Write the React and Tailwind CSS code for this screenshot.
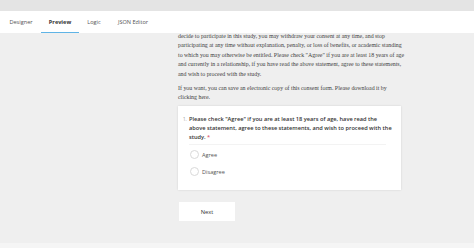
export default function App() {
  const consent = [
    'decide to participate in this study, you may withdraw your consent at any time, and stop',
    'participating at any time without explanation, penalty, or loss of benefits, or academic standing',
    'to which you may otherwise be entitled. Please check "Agree" if you are at least 18 years of age',
    'and currently in a relationship, if you have read the above statement, agree to these statements,',
    'and wish to proceed with the study.',
  ]
  const question = [
    'Please check "Agree" if you are at least 18 years of age, have read the',
    'above statement, agree to these statements, and wish to proceed with the',
  ]

  return (
    <div className="h-[248px] w-[474px] overflow-hidden flex flex-col bg-[#efefef] font-['Open_Sans',sans-serif]">
      {/* top strip */}
      <div className="h-[11px] bg-[#e4e4e4]" />

      {/* tabs */}
      <div className="h-[22px] bg-white flex items-stretch pl-[1px] text-[5.6px] text-[#555]">
        <div className="w-[40px] flex items-center justify-center pt-[1px]">Designer</div>
        <div className="w-[38px] flex items-center justify-center font-bold text-[#333] border-b-[1.5px] border-[#5fb4e6] pt-[2px]">
          Preview
        </div>
        <div className="w-[30px] flex items-center justify-center pt-[1px]">Logic</div>
        <div className="w-[48px] flex items-center justify-center pt-[1px]">JSON Editor</div>
      </div>

      {/* content */}
      <div className="flex-1 flex flex-col pl-[178px] border-l-[6px] border-[#ebebeb] -ml-[6px]">
        <div className="-mt-[1px] font-['Liberation_Serif',serif] text-[5.9px] leading-[9.4px] text-[#3f3f3f]">
          {consent.map((l) => (
            <div key={l} className="whitespace-nowrap">{l}</div>
          ))}
          <div className="mt-[4.6px] whitespace-nowrap">
            If you want, you can save an electronic copy of this consent form. Please download it by
          </div>
          <div className="whitespace-nowrap">clicking here.</div>
        </div>

        <div className="mt-[4px] w-[223px] h-[84px] bg-white shadow-[0_0_2px_rgba(0,0,0,0.12)] px-[5px] pt-[9px]">
          <div className="flex text-[5.65px] leading-[8.8px]">
            <span className="w-[6px] text-[#999] text-[4.5px]">1.</span>
            <div className="font-semibold text-[#333]">
              {question.map((l) => (
                <div key={l} className="whitespace-nowrap">{l}</div>
              ))}
              <div>
                study. <span className="text-[#e0566d]">*</span>
              </div>
            </div>
          </div>
          <div className="mt-[2px] ml-[6px] mr-[10px] h-px bg-[#f3f3f3]" />
          <div className="ml-[7px] mt-[5px] flex flex-col gap-[7px] text-[5.6px] text-[#555]">
            {['Agree', 'Disagree'].map((o) => (
              <div key={o} className="flex items-center gap-[3px] h-[10px]">
                <span className="w-[9px] h-[9px] rounded-full border border-[#d9d9d9] bg-white" />
                <span>{o}</span>
              </div>
            ))}
          </div>
        </div>

        <div className="mt-[12px] ml-[1px] w-[56px] h-[19px] bg-white flex items-center justify-center text-[5.8px] text-[#333]">
          Next
        </div>
      </div>
      <div className="h-[5px] bg-[#f5f5f5]" />
    </div>
  )
}
